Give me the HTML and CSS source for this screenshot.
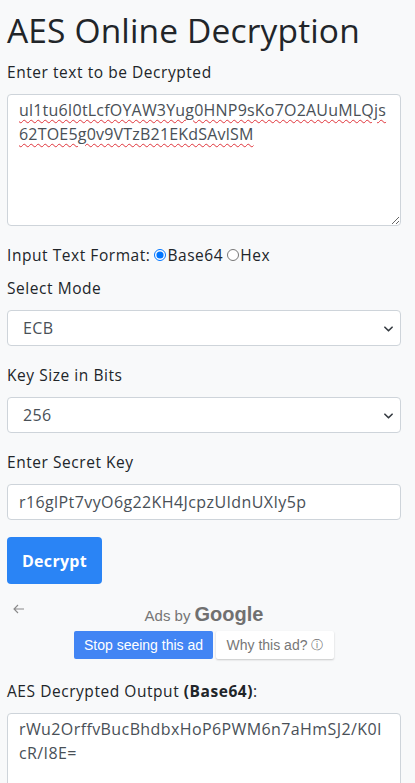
FILE: index.html
```html
<!DOCTYPE html>
<html lang="en">
<head>
<meta charset="utf-8">
<title>AES Online Decryption</title>
<link rel="stylesheet" href="styles.css">
</head>
<body>
<main class="page">
  <h1 class="title">AES Online Decryption</h1>

  <div class="group">
    <label class="label" for="cipher">Enter text to be Decrypted</label>
    <textarea id="cipher" class="field area cipher" spellcheck="true">ul1tu6I0tLcfOYAW3Yug0HNP9sKo7O2AUuMLQjs62TOE5g0v9VTzB21EKdSAvlSM</textarea>
  </div>

  <div class="group format">
    <span>Input Text Format:</span>
    <label class="radio"><input type="radio" name="fmt" checked>Base64</label>
    <label class="radio"><input type="radio" name="fmt">Hex</label>
  </div>

  <div class="group">
    <label class="label" for="mode">Select Mode</label>
    <div class="select-wrap">
      <select id="mode" class="field select"><option>ECB</option></select>
      <svg class="chev" viewBox="0 0 10 6" width="9" height="6"><path d="M1 1l4 4 4-4" fill="none" stroke="#343a40" stroke-width="1.8" stroke-linecap="round" stroke-linejoin="round"/></svg>
    </div>
  </div>

  <div class="group">
    <label class="label" for="bits">Key Size in Bits</label>
    <div class="select-wrap">
      <select id="bits" class="field select"><option>256</option></select>
      <svg class="chev" viewBox="0 0 10 6" width="9" height="6"><path d="M1 1l4 4 4-4" fill="none" stroke="#343a40" stroke-width="1.8" stroke-linecap="round" stroke-linejoin="round"/></svg>
    </div>
  </div>

  <div class="group">
    <label class="label" for="key">Enter Secret Key</label>
    <input id="key" class="field input" type="text" value="r16glPt7vyO6g22KH4JcpzUIdnUXIy5p">
  </div>

  <button class="btn" type="button">Decrypt</button>

  <section class="ad">
    <svg class="back" viewBox="0 0 12 10" width="12" height="10"><path d="M11 5H1.5M5 1L1 5l4 4" fill="none" stroke="#8a8a8a" stroke-width="1.1"/></svg>
    <div class="ads-by">Ads by <b>Google</b></div>
    <div class="ad-btns">
      <span class="stop">Stop seeing this ad</span>
      <span class="why">Why this ad? <span class="info">&#9432;</span></span>
    </div>
  </section>

  <div class="group">
    <div class="label">AES Decrypted Output <b>(Base64)</b>:</div>
    <textarea class="field area out" spellcheck="false">rWu2OrffvBucBhdbxHoP6PWM6n7aHmSJ2/K0IcR/I8E=</textarea>
  </div>
</main>
</body>
</html>
```

FILE: styles.css
```css
* { box-sizing: border-box; }
html, body { margin: 0; padding: 0; background: #f8f9fa; }
body {
  font-family: "Open Sans", "Liberation Sans", sans-serif;
  color: #212529;
}
.page {
  width: 401px;
  padding: 11px 0 0 7px;
  display: flex;
  flex-direction: column;
}
.title {
  margin: 0 0 12px;
  font-size: 33.5px;
  line-height: 38px;
  font-weight: 500;
  letter-spacing: 0.15px;
}
.group { margin-bottom: 18px; display: flex; flex-direction: column; }
.label {
  font-size: 15.5px;
  line-height: 22px;
  margin-bottom: 11px;
  letter-spacing: 0.55px;
}
.label b { font-weight: 700; }
.field {
  width: 394px;
  background: #fff;
  border: 1px solid #ced4da;
  border-radius: 4px;
  color: #495057;
  font-family: "Open Sans", "Liberation Sans", sans-serif;
  font-size: 16px;
  letter-spacing: 0.4px;
  margin: 0;
}
.area {
  height: 132px;
  padding: 3px 11px 7px;
  line-height: 24px;
  resize: vertical;
  overflow: hidden;
}
.cipher {
  letter-spacing: 0.2px;
  text-decoration: underline wavy #e0343b;
  text-decoration-thickness: 1px;
  text-underline-offset: 3px;
}
.area.out { height: 80px; }
.format {
  flex-direction: row;
  align-items: center;
  font-size: 15.5px;
  letter-spacing: 0.55px;
  line-height: 22px;
  margin-bottom: 11px;
}
.radio { display: inline-flex; align-items: center; }
.radio input { margin: 0 1px 0 4px; width: 12px; height: 12px; }
.select-wrap { position: relative; width: 394px; }
.select {
  height: 36px;
  padding: 0 15px;
  appearance: none;
  -webkit-appearance: none;
}
.chev { position: absolute; right: 8px; top: 16px; pointer-events: none; }
.input { height: 36px; padding: 0 11px; }
.btn {
  align-self: flex-start;
  width: 95px;
  height: 47px;
  margin-top: -1px;
  border: 0;
  border-radius: 4px;
  background: #2a84f5;
  color: #fff;
  font-family: "Open Sans", "Liberation Sans", sans-serif;
  font-weight: 700;
  font-size: 16px;
  letter-spacing: 0.3px;
}
.ad {
  position: relative;
  height: 96px;
  display: flex;
  flex-direction: column;
  align-items: center;
  padding-top: 20px;
  width: 394px;
}
.back { position: absolute; left: 6px; top: 20px; }
.ads-by {
  font-family: "Liberation Sans", Arial, sans-serif;
  color: #757575;
  font-size: 15px;
  line-height: 20px;
}
.ads-by b { font-size: 20px; font-weight: 700; color: #707070; }
.ad-btns { display: flex; gap: 3px; margin-top: 5px; }
.stop, .why {
  height: 28px;
  display: inline-flex;
  align-items: center;
  font-family: "Liberation Sans", Arial, sans-serif;
  font-size: 14px;
  border-radius: 2px;
}
.stop { background: #4285f4; color: #fff; padding: 0 8px; width: 139px; justify-content: center; }
.why { background: #fff; color: #777; padding: 0 8px; width: 118px; justify-content: center; box-shadow: 0 1px 2px rgba(0,0,0,0.2); }
.info { font-size: 12px; margin-left: 4px; }
```
